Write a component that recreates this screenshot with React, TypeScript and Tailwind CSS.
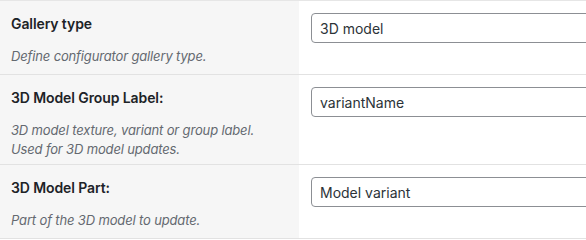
const rows = [
  {
    label: "Gallery type",
    desc: ["Define configurator gallery type."],
    value: "3D model",
    height: "h-[74px]",
  },
  {
    label: "3D Model Group Label:",
    desc: ["3D model texture, variant or group label.", "Used for 3D model updates."],
    value: "variantName",
    height: "h-[90px]",
  },
  {
    label: "3D Model Part:",
    desc: ["Part of the 3D model to update."],
    value: "Model variant",
    height: "h-[74px]",
  },
];

export default function App() {
  return (
    <div className="w-[586px] h-[240px] overflow-hidden bg-white font-['Inter',sans-serif] text-[#1d2327] border-t border-[#e6e6e6]">
      {rows.map((row) => (
        <div key={row.label} className={`grid grid-cols-[299px_1fr] border-b border-[#e2e2e2] ${row.height}`}>
          <div className="bg-[#f6f6f6] pl-[11px] pt-[13px]">
            <div className="text-[14px] leading-[20px] font-semibold tracking-[-0.1px]">{row.label}</div>
            <div className="mt-[13px] text-[13px] leading-[19px] italic text-[#646970] tracking-[-0.15px]">
              {row.desc.map((line) => (
                <div key={line}>{line}</div>
              ))}
            </div>
          </div>
          <div className="pl-[12px] pt-[12px]">
            <div className="w-[320px] h-[30px] border border-[#8c8f94] rounded-[4px] flex items-center px-[8px] text-[14px] text-[#2c3338] bg-white">
              {row.value}
            </div>
          </div>
        </div>
      ))}
    </div>
  );
}
